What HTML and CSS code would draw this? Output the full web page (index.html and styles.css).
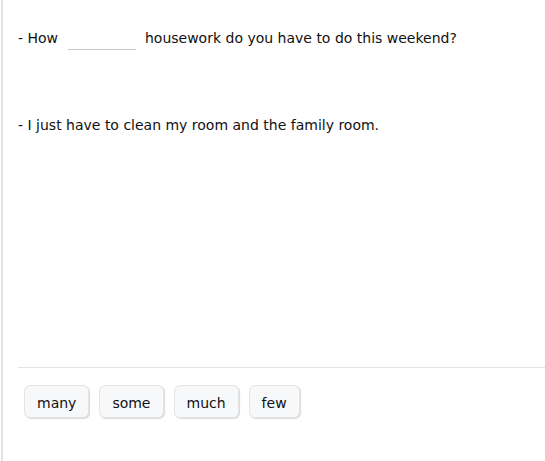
FILE: index.html
```html
<!DOCTYPE html>
<html lang="en">
<head>
  <meta charset="UTF-8">
  <meta name="viewport" content="width=device-width, initial-scale=1.0">
  <title>Fill in the blank</title>
  <link rel="stylesheet" href="styles.css">
</head>
<body>
  <div class="exercise">
    <!-- Dialogue -->
    <div class="dialogue">
      <p class="line">- How <span class="blank"></span> housework do you have to do this weekend?</p>
      <p class="line">- I just have to clean my room and the family room.</p>
    </div>

    <!-- Word choices -->
    <div class="choices">
      <button class="choice">many</button>
      <button class="choice">some</button>
      <button class="choice">much</button>
      <button class="choice">few</button>
    </div>
  </div>
</body>
</html>
```

FILE: styles.css
```css
:root {
  --text-color: #111111;
  --border-color: #e2e2e2;
  --button-bg: #f7f8fa;
}

* {
  margin: 0;
  padding: 0;
  box-sizing: border-box;
}

body {
  font-family: "DejaVu Sans", Verdana, sans-serif;
  font-size: 14px;
  color: var(--text-color);
  background: #ffffff;
}

.exercise {
  border-left: 2px solid var(--border-color);
  margin-left: 1px;
  min-height: 461px;
}

/* Dialogue */
.dialogue {
  height: 368px;
  padding-top: 28px;
  margin-left: 15px;
  border-bottom: 1px solid var(--border-color);
}

.line {
  line-height: 20px;
  margin-bottom: 65px;
}

.blank {
  display: inline-block;
  width: 68px;
  height: 18px;
  margin: 0 5px;
  border-bottom: 1px solid #c8c8c8;
  vertical-align: -7px;
}

/* Choices */
.choices {
  display: flex;
  gap: 10px;
  padding: 17px 0 0 21px;
}

.choice {
  font-family: inherit;
  font-size: 14px;
  color: var(--text-color);
  background: var(--button-bg);
  border: 1px solid #e4e4e4;
  border-radius: 6px;
  box-shadow: 1px 1px 1px rgba(0, 0, 0, 0.15);
  height: 33px;
  padding: 2px 12px 0;
  cursor: pointer;
}
```
